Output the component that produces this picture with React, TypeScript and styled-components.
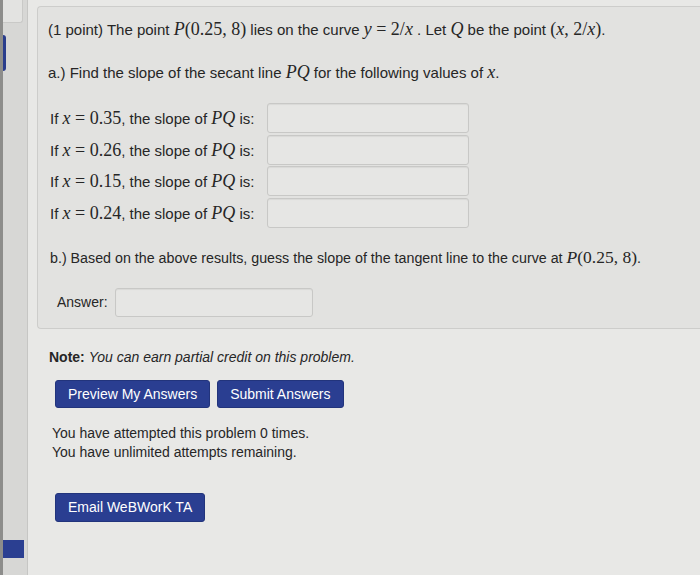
import React from 'react';
import styled, { createGlobalStyle } from 'styled-components';

const GlobalStyle = createGlobalStyle`
    html, body {
        margin: 0;
        padding: 0;
        background-color: #e8e8e6;
    }
    body {
        font-family: "Liberation Sans", Arial, sans-serif;
        color: #262626;
    }
`;

const Page = styled.div`
    display: flex;
    width: 700px;
    height: 575px;
    overflow: hidden;
    background-color: #e8e8e6;
`;

const Sidebar = styled.div`
    width: 28px;
    flex-shrink: 0;
    display: flex;
    flex-direction: column;
    background-color: #d7d7d5;
    border-left: 3px solid #8d8d8b;
    border-right: 1px solid #c6c6c4;
    box-sizing: border-box;
`;

const SideBox = styled.div`
    width: 19px;
    height: 22px;
    background-color: #e3e3e1;
    border-right: 1px solid #c9c9c7;
    border-bottom: 1px solid #c9c9c7;
    border-bottom-right-radius: 3px;
`;

const SideTab = styled.div`
    width: 3px;
    height: 36px;
    margin-top: 12px;
    background-color: #2a3d8c;
    border-radius: 0 3px 3px 0;
`;

const SideSpacer = styled.div`
    flex: 1;
`;

const SideBar = styled.div`
    width: 21px;
    height: 18px;
    margin-bottom: 17px;
    background-color: #2b3f91;
`;

const Main = styled.div`
    flex: 1;
    padding: 6px 0 0 9px;
    min-width: 0;
`;

const ProblemBox = styled.div`
    background-color: #e2e2e0;
    border: 1px solid #cdcdcb;
    border-right: none;
    border-radius: 4px 0 0 4px;
    padding: 13px 0 11px 10px;
`;

const Text = styled.div<{ indent?: number; top?: number; size?: number }>`
    font-size: ${p => p.size || 15}px;
    line-height: 18px;
    margin-left: ${p => p.indent || 0}px;
    margin-top: ${p => p.top || 0}px;
    white-space: nowrap;
`;

const M = styled.span<{ size?: number }>`
    font-family: "Liberation Serif", "Times New Roman", serif;
    font-size: ${p => p.size || 18}px;
    line-height: 1;
`;

const I = styled.i`
    font-family: "Liberation Serif", "Times New Roman", serif;
    font-style: italic;
`;

const Rows = styled.div`
    margin-top: 21px;
    margin-left: 2px;
    display: flex;
    flex-direction: column;
    gap: 1.5px;
`;

const Row = styled.div`
    display: flex;
    align-items: center;
`;

const RowLabel = styled.span<{ w?: number; size?: number }>`
    width: ${p => (p.w ? `${p.w}px` : 'auto')};
    font-size: ${p => p.size || 15}px;
    white-space: nowrap;
`;

const Field = styled.input<{ w: number; h: number }>`
    width: ${p => p.w}px;
    height: ${p => p.h}px;
    box-sizing: border-box;
    background-color: #e6e6e4;
    border: 1px solid #c8c8c6;
    border-radius: 3px;
    box-shadow: inset 0 1px 1px rgba(0, 0, 0, 0.06);
    padding: 0 6px;
    font-size: 14px;
    outline: none;
`;

const AnswerRow = styled.div`
    margin-top: 21px;
    margin-left: 9px;
    display: flex;
    align-items: center;
    gap: 7px;
`;

const Below = styled.div`
    padding-left: 12px;
`;

const Strong = styled.b`
    font-weight: bold;
`;

const Em = styled.em`
    font-style: italic;
`;

const Buttons = styled.div<{ top: number }>`
    display: flex;
    gap: 7px;
    margin: ${p => p.top}px 0 0 6px;
`;

const Button = styled.button<{ h?: number }>`
    height: ${p => p.h || 28}px;
    padding: 0 12px;
    background-color: #2a3e91;
    color: #ffffff;
    border: 1px solid #22347c;
    border-radius: 3px;
    font-family: "Liberation Sans", Arial, sans-serif;
    font-size: 14px;
    cursor: pointer;
`;

const Attempts = styled.div`
    margin: 16px 0 0 3px;
    font-size: 14px;
    line-height: 19px;
`;

const App: React.FC = () => {
    const rows = ['0.35', '0.26', '0.15', '0.24'];

    return (
        <>
            <GlobalStyle />
            <Page>
                <Sidebar>
                    <SideBox />
                    <SideTab />
                    <SideSpacer />
                    <SideBar />
                </Sidebar>
                <Main>
                    <ProblemBox>
                        <Text>
                            (1 point) The point <M><I>P</I>(0.25, 8)</M> lies on the curve{' '}
                            <M><I>y</I> = 2/<I>x</I></M> . Let <M><I>Q</I></M> be the point{' '}
                            <M>(<I>x</I>, 2/<I>x</I>)</M>.
                        </Text>
                        <Text top={24}>
                            a.) Find the slope of the secant line <M><I>PQ</I></M> for the following values of{' '}
                            <M><I>x</I></M>.
                        </Text>
                        <Rows>
                            {rows.map(v => (
                                <Row key={v}>
                                    <RowLabel w={217}>
                                        If <M><I>x</I> = {v}</M>, the slope of <M><I>PQ</I></M> is:
                                    </RowLabel>
                                    <Field w={202} h={30} />
                                </Row>
                            ))}
                        </Rows>
                        <Text top={21} indent={2} size={14.25}>
                            b.) Based on the above results, guess the slope of the tangent line to the curve at{' '}
                            <M size={17.5}><I>P</I>(0.25, 8)</M>.
                        </Text>
                        <AnswerRow>
                            <RowLabel size={14}>Answer:</RowLabel>
                            <Field w={198} h={29} />
                        </AnswerRow>
                    </ProblemBox>
                    <Below>
                        <Text top={19} size={14}>
                            <Strong>Note:</Strong> <Em>You can earn partial credit on this problem.</Em>
                        </Text>
                        <Buttons top={14}>
                            <Button>Preview My Answers</Button>
                            <Button>Submit Answers</Button>
                        </Buttons>
                        <Attempts>
                            You have attempted this problem 0 times.
                            <br />
                            You have unlimited attempts remaining.
                        </Attempts>
                        <Buttons top={31}>
                            <Button h={29}>Email WeBWorK TA</Button>
                        </Buttons>
                    </Below>
                </Main>
            </Page>
        </>
    );
};

export default App;
